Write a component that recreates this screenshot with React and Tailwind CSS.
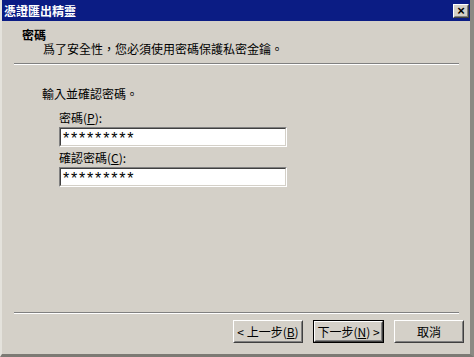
import React from 'react'

const font = { fontFamily: '"Noto Sans CJK TC", "Liberation Sans", sans-serif' }

const Bevel = ({ children, className = '' }) => (
  <div className={`border border-t-white border-l-white border-r-[#404040] border-b-[#404040] ${className}`}>
    <div className="w-full h-full border border-t-[#d4d0c8] border-l-[#d4d0c8] border-r-[#808080] border-b-[#808080] flex items-center justify-center">
      {children}
    </div>
  </div>
)

const Field = ({ label, mnemonic, value }) => (
  <div className="flex flex-col">
    <div className="text-[12px] leading-[14px] text-black">
      {label}(<span className="underline">{mnemonic}</span>):
    </div>
    <div className="mt-[2px] w-[228px] h-[20px] border border-t-[#808080] border-l-[#808080] border-r-white border-b-white">
      <div className="w-full h-full border border-t-[#404040] border-l-[#404040] border-r-[#d4d0c8] border-b-[#d4d0c8] bg-white flex items-center pl-[2px]">
        <span className="text-[16px] leading-[12px] tracking-[1.8px] text-black pt-[4px]" style={{ fontFamily: '"Liberation Sans", sans-serif' }}>{value}</span>
      </div>
    </div>
  </div>
)

const Separator = () => (
  <div className="mx-[12px] mr-[11px] border-t border-t-[#808080] border-b border-b-white" />
)

export default function App() {
  return (
    <div className="w-[474px] h-[357px] bg-[#d4d0c8] flex flex-col border-r-[4px] border-r-[#8c8a84] border-b-[3px] border-b-[#7c7a74] border-l-[2px] border-l-[#e4e2dc]" style={font}>
      <div className="h-[21px] bg-[#0b1c84] flex items-center justify-between pl-[2px] pr-[1px]">
        <span className="text-white font-bold text-[12px] leading-[14px]">憑證匯出精靈</span>
        <Bevel className="w-[16px] h-[14px] bg-[#d4d0c8]">
          <span className="text-[13px] leading-[10px] font-bold text-black" style={{ fontFamily: '"Liberation Sans", sans-serif' }}>×</span>
        </Bevel>
      </div>

      <div className="pt-[7px] pl-[20px] h-[42px]">
        <div className="font-bold text-[12px] leading-[14px] text-black">密碼</div>
        <div className="pl-[21px] text-[12px] leading-[14px] text-black">爲了安全性，您必須使用密碼保護私密金鑰。</div>
      </div>

      <Separator />

      <div className="flex-1 pl-[40px] pt-[22px] flex flex-col">
        <div className="text-[12px] leading-[14px] text-black">輸入並確認密碼。</div>
        <div className="pl-[17px] mt-[10px] flex flex-col gap-[4px]">
          <Field label="密碼" mnemonic="P" value="*********" />
          <Field label="確認密碼" mnemonic="C" value="*********" />
        </div>
      </div>

      <Separator />

      <div className="h-[40px] flex justify-end items-start pt-[6px] pr-[6px] gap-[10px]">
        <Bevel className="w-[70px] h-[23px]">
          <span className="text-[12px] leading-[14px] text-black">&lt; 上一步(<span className="underline">B</span>)</span>
        </Bevel>
        <div className="w-[71px] h-[23px] border border-black">
          <Bevel className="w-full h-full">
            <span className="text-[12px] leading-[14px] text-black">下一步(<span className="underline">N</span>) &gt;</span>
          </Bevel>
        </div>
        <Bevel className="w-[70px] h-[23px]">
          <span className="text-[12px] leading-[14px] text-black">取消</span>
        </Bevel>
      </div>
    </div>
  )
}
